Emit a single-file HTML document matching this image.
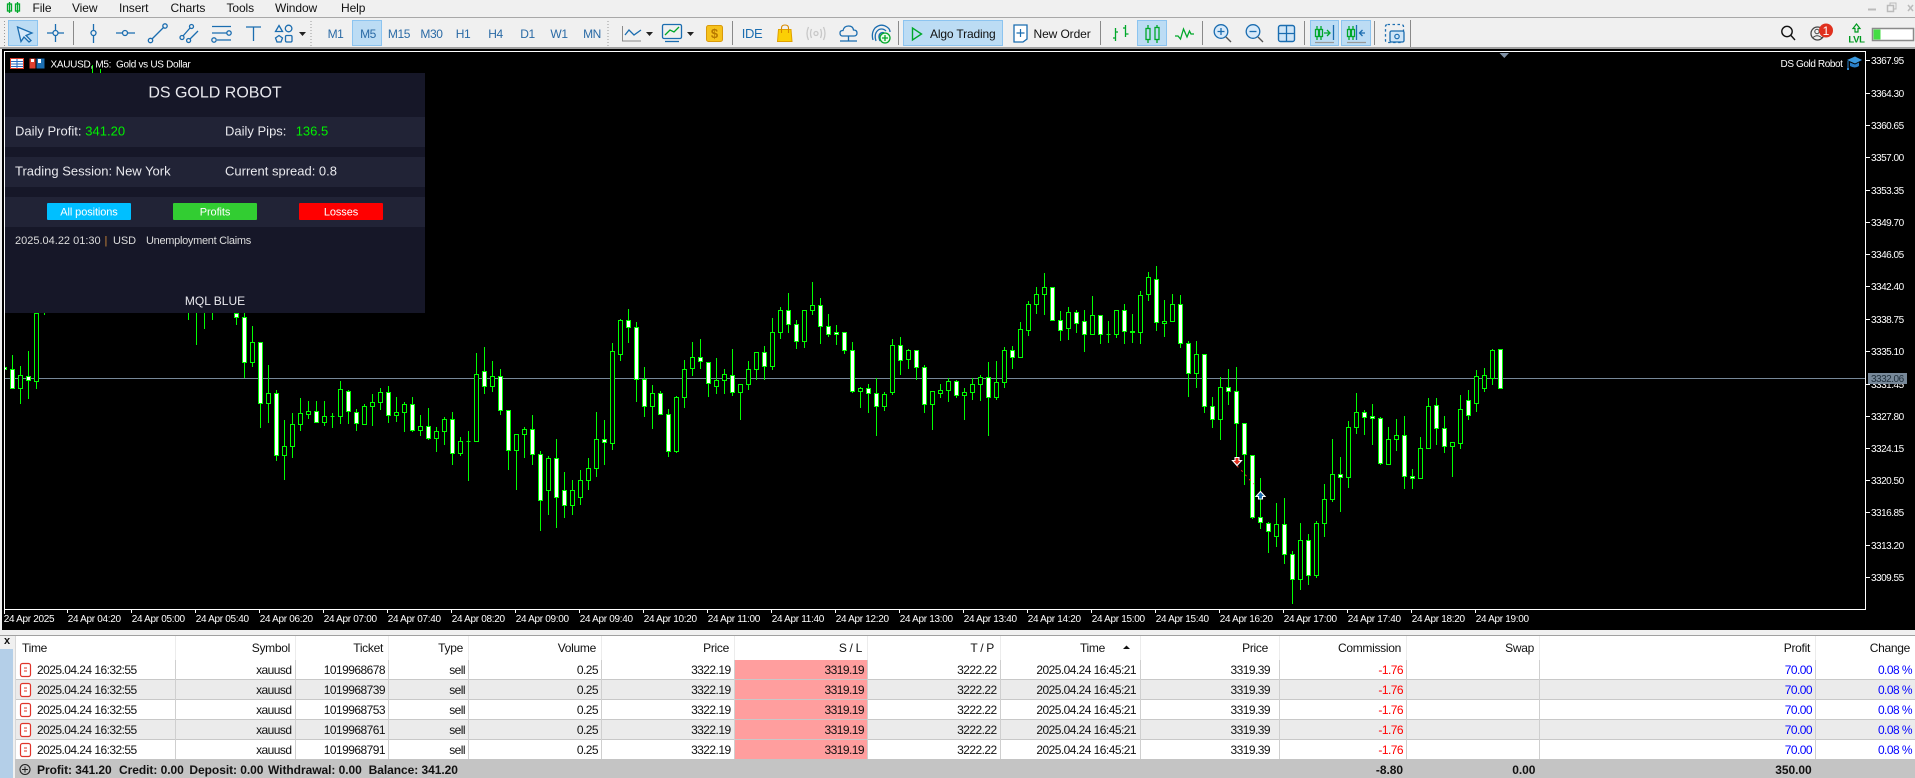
<!DOCTYPE html>
<html lang="en">
<head>
<meta charset="utf-8">
<title>XAUUSD M5 - DS Gold Robot</title>
<style>
html,body{margin:0;padding:0;background:#f0f0f0;width:1915px;height:778px;overflow:hidden}
svg{display:block}
text{font-family:"Liberation Sans",Arial,sans-serif}
.m{font-size:12px;fill:#111;letter-spacing:-.1px}
.tf{font-size:12px;fill:#2a6aa5;text-anchor:middle;letter-spacing:-.4px}
.px{font-size:10px;fill:#fff;letter-spacing:-.5px}
.tm{font-size:10px;fill:#fff;letter-spacing:-.3px}
.h{font-size:12px;fill:#111;letter-spacing:-.3px;text-anchor:end}
.c{font-size:12px;fill:#111;letter-spacing:-.55px;text-anchor:end}
.r{font-size:12px;fill:#f00;letter-spacing:-.55px;text-anchor:end}
.b{font-size:12px;fill:#00f;letter-spacing:-.55px;text-anchor:end}
.d{font-size:12px;fill:#111;letter-spacing:-.55px}
.s{font-size:12px;fill:#111;font-weight:bold;letter-spacing:-.05px}
.pl{font-size:13px;fill:#e9e9ee}
.gr{font-size:13px;fill:#00f000}
.bt{font-size:11px;fill:#fff;text-anchor:middle;letter-spacing:-.1px}
.nw{font-size:11px;fill:#dcdcdc}
.i{fill:none;stroke:#1b6db0;stroke-width:1.3}
.g{fill:none;stroke:#00a82a;stroke-width:1.3}
</style>
</head>
<body>
<svg width="1915" height="778" viewBox="0 0 1915 778" xmlns="http://www.w3.org/2000/svg">
<rect width="1915" height="778" fill="#f0f0f0"/>

<!-- menu -->
<g class="g" fill="none" stroke="#00a82a"><path d="M9.5 2V13M17.5 2V13"/><rect x="7.5" y="4" width="4" height="7"/><rect x="15.5" y="4" width="4" height="7"/></g>
<text class="m" x="32.5" y="12">File</text>
<text class="m" x="72" y="12">View</text>
<text class="m" x="119" y="12">Insert</text>
<text class="m" x="170.5" y="12">Charts</text>
<text class="m" x="226.5" y="12">Tools</text>
<text class="m" x="275" y="12">Window</text>
<text class="m" x="341" y="12">Help</text>
<rect x="0" y="17" width="1915" height="1" fill="#a8a8a8"/>
<path d="M1868 9.5H1876" stroke="#bbb" stroke-width="2"/>
<rect x="1887.5" y="5.5" width="6" height="6" fill="none" stroke="#bbb" stroke-width="1.5"/>
<path d="M1890 5V3H1896V9H1894" fill="none" stroke="#bbb"/>
<path d="M1908 5L1913 11M1913 5L1908 11" stroke="#bbb" stroke-width="1.5"/>

<!-- toolbar separators -->
<path d="M4.5 21V46M311 21V46M608 21V46" stroke="#9a9a9a" stroke-dasharray="1 2"/>
<path d="M73.5 21V45M732.5 21V45M898.5 21V45M1100.5 21V45M1202.5 21V45M1304.5 21V45M1374.5 21V45M1410.5 20V47" stroke="#8a8a8a"/>

<!-- highlighted buttons -->
<g fill="#bcdcf4" stroke="#8cc4f0">
<rect x="8.5" y="20.5" width="29" height="25"/>
<rect x="352.5" y="20.5" width="29" height="25"/>
<rect x="903.5" y="20.5" width="99" height="25"/>
<rect x="1137.5" y="20.5" width="29" height="25"/>
<rect x="1310.5" y="20.5" width="28" height="25"/>
<rect x="1341.5" y="20.5" width="29" height="25"/>
</g>

<!-- drawing tools -->
<path d="M17.5 27L32 33L26 35.5L31 40.5L29 42L24 37L21 41.5Z" fill="#d8eafa" stroke="#1b6db0" stroke-width="1.3"/>
<g class="i">
<path d="M47 33H53M58 33H64M55.5 24V30.5M55.5 35.5V42"/><circle cx="55.5" cy="33" r="2.5"/>
<path d="M93.5 24V30.5M93.5 35.5V43"/><circle cx="93.5" cy="33" r="2.5"/>
<path d="M116 33H122.5M127.5 33H135"/><circle cx="125" cy="33" r="2.5"/>
<path d="M152 39L164 27"/><circle cx="150.5" cy="40.5" r="2.2"/><circle cx="165" cy="26" r="2.2"/>
<path d="M183 36L190 28M190 39L198 31"/><circle cx="182" cy="37.5" r="2"/><circle cx="191.5" cy="26.5" r="2"/><circle cx="188.6" cy="40.5" r="2"/>
<path d="M212 26.5H231M212 33H227M217 40H231"/><circle cx="229" cy="33" r="2.2"/><circle cx="214" cy="40" r="2.2"/>
<path d="M246 27H261M253.5 27V41"/>
<path d="M279 25.5L282.5 31.5H275.5Z"/><circle cx="288.6" cy="28.5" r="3.3"/>
<path d="M279 35.5L282.5 38L281 42H277L275.5 38Z"/><rect x="285.5" y="35.5" width="6.5" height="6.5" rx="1.2"/>
</g>
<path d="M299 32H306L302.5 36Z" fill="#222"/>

<!-- timeframes -->
<text class="tf" x="335.5" y="38">M1</text>
<text class="tf" x="368" y="38">M5</text>
<text class="tf" x="399" y="38">M15</text>
<text class="tf" x="431.5" y="38">M30</text>
<text class="tf" x="463" y="38">H1</text>
<text class="tf" x="495.5" y="38">H4</text>
<text class="tf" x="527.5" y="38">D1</text>
<text class="tf" x="559" y="38">W1</text>
<text class="tf" x="592" y="38">MN</text>

<!-- chart style icons -->
<path d="M622.5 26V41H641" fill="none" stroke="#8a8a8a"/>
<path d="M625 35L629 30L634 35L641 30" class="i"/>
<path d="M646 32H653L649.5 36Z" fill="#222"/>
<rect x="662.5" y="24.5" width="19" height="14" rx="1.5" class="i"/>
<path d="M665 35L670 30L674 32L679 27" class="g"/>
<path d="M665 41.5H679" class="i"/>
<path d="M687 32H694L690.5 36Z" fill="#222"/>
<rect x="706.5" y="25.5" width="16" height="16" rx="2" fill="#f6c21c" stroke="#d99a0a"/>
<text x="714.5" y="38" font-size="13" font-weight="bold" fill="#b87800" text-anchor="middle">$</text>

<text x="752" y="38" font-size="13" fill="#1b6db0" text-anchor="middle" letter-spacing="-.4">IDE</text>

<!-- market bag -->
<path d="M778.5 29.5H791L792 41.5H777.5Z" fill="#fbcf05" stroke="#e0a000"/>
<path d="M781.5 33V28Q781.5 25 785 25Q788.5 25 788.5 28V33" fill="none" stroke="#d88a00" stroke-width="1.1"/>

<!-- signals -->
<g fill="none" stroke="#c8c8c8" stroke-width="1.3">
<circle cx="816" cy="33.5" r="2"/>
<path d="M811.5 29Q809.5 33.5 811.5 38M820.5 29Q822.5 33.5 820.5 38M808.5 27Q805.5 33.5 808.5 40M823.5 27Q826.5 33.5 823.5 40"/>
</g>

<!-- cloud -->
<path d="M842.5 36Q840 36 840 33Q840 30.5 843 30.5Q844 26 848.5 26Q853 26 853.5 30Q857 30 857 33Q857 36 854 36Z" class="i"/>
<path d="M848.5 36V41M840 41H857" class="i"/>

<!-- vps -->
<g class="i">
<path d="M873 40Q871 33 875 28Q881 23 887 27Q890 29 890 32"/>
<path d="M876 41Q873.5 33 879 29.5Q883 28 886 31"/>
<path d="M880 41Q877.5 35 881 33Q883 32 884 33"/>
</g>
<circle cx="885" cy="38" r="5" fill="#eafbe8" stroke="#00a82a" stroke-width="1.3"/>
<path d="M885 35V41M882 38H888" stroke="#00a82a" stroke-width="1.3"/>

<!-- algo trading / new order -->
<path d="M912.5 28V40L921.5 34Z" fill="none" stroke="#00a82a" stroke-width="1.4"/>
<text x="930" y="38" font-size="12" fill="#111" letter-spacing="-.15">Algo Trading</text>
<path d="M1014 25H1027V39L1023 42H1014Z" fill="#fff" stroke="#1b6db0" stroke-width="1.3"/>
<path d="M1020.5 29V37M1016.5 33H1024.5" stroke="#1b6db0" stroke-width="1.2"/>
<text x="1033.5" y="38" font-size="12" fill="#111" letter-spacing="-.1">New Order</text>

<!-- chart types -->
<g class="g">
<path d="M1115.5 28V41M1113 38H1115.5M1115.5 32H1118"/>
<path d="M1125.5 25V37M1123 28H1125.5M1125.5 34H1128.5"/>
<path d="M1148 25V43M1157 25V43"/>
<rect x="1146" y="28.5" width="4" height="11" fill="#bcdcf4"/>
<rect x="1155" y="27.5" width="4" height="12" fill="#bcdcf4"/>
<path d="M1175 36L1178 36L1180.5 39L1183.5 29L1187 37L1189.5 31L1191 34H1194"/>
</g>

<!-- zoom -->
<g class="i" stroke-width="1.4">
<circle cx="1221" cy="31.5" r="6.8" fill="#d8eafa"/>
<path d="M1221 28V35M1217.5 31.5H1224.5"/>
<circle cx="1253" cy="31.5" r="6.8" fill="#d8eafa"/>
<path d="M1249.5 31.5H1256.5"/>
</g>
<path d="M1226 37L1231 42M1258 37L1263 42" stroke="#555" stroke-width="1.4"/>
<rect x="1278.5" y="25.5" width="16" height="16" rx="2" fill="#cfe5f7" stroke="#1b6db0" stroke-width="1.4"/>
<path d="M1286.5 25.5V41.5M1278.5 33.5H1294.5" stroke="#1b6db0" stroke-width="1.3"/>

<!-- autoscroll / shift -->
<g class="g">
<path d="M1317 26V40M1321 26V40"/>
<rect x="1315.5" y="29.5" width="3" height="7" fill="#bcdcf4"/><rect x="1319.5" y="29.5" width="3" height="7" fill="#bcdcf4"/>
<path d="M1324 33H1330M1327 30L1330 33L1327 36"/>
<path d="M1349 26V40M1353 26V40"/>
<rect x="1347.5" y="29.5" width="3" height="7" fill="#bcdcf4"/><rect x="1351.5" y="29.5" width="3" height="7" fill="#bcdcf4"/>
</g>
<path d="M1333.5 25V40M1356.5 25V40M1365 33H1359.5M1362.5 30L1359.5 33L1362.5 36" fill="none" stroke="#1b6db0" stroke-width="1.3"/>
<path d="M1315 42.5H1334M1347 42.5H1366" stroke="#999" stroke-width="1.2"/>

<!-- screenshot -->
<rect x="1385.5" y="24.5" width="18" height="18" rx="2" fill="none" stroke="#1b6db0" stroke-width="1.3" stroke-dasharray="2.5 2.5"/>
<rect x="1390" y="31" width="14" height="11" rx="1.5" fill="#cfe5f7" stroke="#1b6db0" stroke-width="1.3"/>
<circle cx="1397" cy="36.5" r="2.2" fill="none" stroke="#1b6db0" stroke-width="1.2"/>

<!-- right side toolbar -->
<circle cx="1787" cy="31.5" r="5.2" fill="none" stroke="#111" stroke-width="1.4"/>
<path d="M1791 35.5L1795 40" stroke="#111" stroke-width="1.4"/>
<circle cx="1817.5" cy="33.5" r="6.5" fill="none" stroke="#444" stroke-width="1.3"/>
<circle cx="1817" cy="31.5" r="2.2" fill="none" stroke="#444"/>
<path d="M1812.5 38Q1817 33.5 1822 38" fill="none" stroke="#444"/>
<circle cx="1826" cy="30.5" r="7" fill="#e0301e"/>
<text x="1826" y="35" font-size="12" fill="#fff" text-anchor="middle">1</text>
<path d="M1856.5 24L1860 28.5H1858V32H1855V28.5H1853Z" fill="none" stroke="#009a20" stroke-width="1.2"/>
<text x="1856.5" y="42.5" font-size="9.5" font-weight="bold" fill="#009a20" text-anchor="middle" letter-spacing="-.3">LVL</text>
<rect x="1872.5" y="28.5" width="41" height="12" fill="#fff" stroke="#8a8a8a" stroke-width="1.5"/>
<rect x="1873.5" y="29.5" width="7" height="10" fill="#44dd44"/>

<rect x="0" y="47" width="1915" height="2" fill="#a0a0a0"/>

<!-- chart -->
<rect x="2" y="49" width="1913" height="581" fill="#000"/>
<rect x="5" y="378" width="1860" height="1" fill="#778899"/>

<g shape-rendering="crispEdges">
<path fill="none" stroke="#0f0" d="M92.5 65V73M100.5 69V73M12.5 355V388M20.5 366V404M28.5 351V399M36.5 313V389M44.5 313V315M188.5 313V320M196.5 313V345M204.5 313V329M212.5 313V320M236.5 313V325M244.5 313V378M252.5 326V367M260.5 342V428M268.5 365V423M276.5 390V461M284.5 420V480M292.5 413V458M300.5 398V431M308.5 401V419M316.5 401V423M324.5 401V426M332.5 413V428M340.5 381V424M348.5 390V424M356.5 409V431M364.5 404V425M372.5 394V426M380.5 388V410M388.5 386V423M396.5 397V422M404.5 402V432M412.5 397V432M420.5 415V436M428.5 408V440M436.5 427V452M444.5 417V445M452.5 412V465M460.5 437V456M468.5 431V481M476.5 353V441M484.5 347V394M492.5 361V392M500.5 369V415M508.5 410V470M516.5 434V490M524.5 427V458M532.5 415V465M540.5 451V531M548.5 456V515M556.5 439V528M564.5 472V518M572.5 480V515M580.5 470V505M588.5 458V490M596.5 412V477M604.5 420V465M612.5 343V450M620.5 319V361M628.5 309V343M636.5 322V402M644.5 367V417M652.5 385V429M660.5 391V415M668.5 409V457M676.5 396V453M684.5 360V408M692.5 342V376M700.5 339V369M708.5 362V397M716.5 358V394M724.5 369V394M732.5 349V396M740.5 384V420M748.5 361V390M756.5 352V380M764.5 346V380M772.5 318V370M780.5 307V339M788.5 293V333M796.5 320V349M804.5 310V348M812.5 282V315M820.5 298V344M828.5 314V337M836.5 325V345M844.5 332V354M852.5 342V393M860.5 387V408M868.5 384V413M876.5 378V436M884.5 392V411M892.5 339V395M900.5 337V375M908.5 349V369M916.5 350V380M924.5 365V413M932.5 391V430M940.5 384V398M948.5 378V402M956.5 380V398M964.5 388V420M972.5 378V400M980.5 375V401M988.5 362V436M996.5 361V400M1004.5 347V388M1012.5 346V369M1020.5 322V357M1028.5 301V336M1036.5 287V314M1044.5 273V315M1052.5 287V320M1060.5 311V341M1068.5 307V340M1076.5 310V333M1084.5 310V352M1092.5 296V335M1100.5 315V344M1108.5 321V343M1116.5 310V338M1124.5 304V344M1132.5 314V343M1140.5 291V344M1148.5 272V301M1156.5 266V331M1164.5 300V337M1172.5 294V322M1180.5 295V348M1188.5 341V397M1196.5 341V388M1204.5 354V413M1212.5 397V428M1220.5 377V440M1228.5 369V405M1236.5 367V457M1244.5 423V485M1252.5 455V519M1260.5 478V529M1268.5 522V553M1276.5 503V547M1284.5 498V564M1292.5 551V604M1300.5 523V590M1308.5 534V585M1316.5 521V578M1324.5 484V537M1332.5 439V502M1340.5 457V512M1348.5 421V488M1356.5 393V434M1364.5 410V435M1372.5 404V445M1380.5 417V465M1388.5 427V465M1396.5 419V451M1404.5 416V489M1412.5 469V489M1420.5 437V478M1428.5 398V449M1436.5 398V445M1444.5 416V453M1452.5 442V477M1460.5 395V449M1468.5 390V420M1476.5 370V412M1484.5 368V392M1492.5 349V385M1500.5 349V389"/>
<g transform="translate(0,.5)">
<path fill="#000" stroke="#0f0" d="M18.5 375h4V388h-4zM34.5 313h4V381h-4zM250.5 342h4V362h-4zM266.5 393h4V403h-4zM282.5 446h4V455h-4zM290.5 424h4V446h-4zM298.5 413h4V424h-4zM306.5 411h4V414h-4zM322.5 416h4V422h-4zM330.5 416h4V416h-4zM338.5 389h4V416h-4zM362.5 406h4V424h-4zM370.5 402h4V406h-4zM378.5 392h4V402h-4zM394.5 412h4V415h-4zM402.5 404h4V412h-4zM418.5 426h4V430h-4zM434.5 431h4V438h-4zM442.5 419h4V431h-4zM458.5 441h4V453h-4zM466.5 441h4V441h-4zM474.5 374h4V441h-4zM490.5 376h4V386h-4zM514.5 434h4V450h-4zM522.5 429h4V434h-4zM546.5 458h4V490h-4zM570.5 490h4V505h-4zM578.5 480h4V497h-4zM586.5 468h4V480h-4zM594.5 439h4V468h-4zM610.5 351h4V443h-4zM618.5 320h4V354h-4zM650.5 393h4V406h-4zM674.5 397h4V451h-4zM682.5 369h4V397h-4zM690.5 357h4V368h-4zM714.5 380h4V386h-4zM722.5 374h4V380h-4zM738.5 384h4V392h-4zM746.5 369h4V384h-4zM754.5 352h4V369h-4zM770.5 332h4V366h-4zM778.5 310h4V332h-4zM802.5 310h4V341h-4zM810.5 305h4V310h-4zM858.5 388h4V391h-4zM882.5 394h4V406h-4zM890.5 345h4V392h-4zM906.5 350h4V359h-4zM930.5 391h4V404h-4zM938.5 390h4V393h-4zM946.5 381h4V390h-4zM962.5 392h4V395h-4zM970.5 384h4V392h-4zM978.5 377h4V384h-4zM994.5 382h4V397h-4zM1002.5 350h4V382h-4zM1018.5 329h4V357h-4zM1026.5 304h4V330h-4zM1034.5 294h4V304h-4zM1042.5 287h4V294h-4zM1066.5 312h4V328h-4zM1090.5 315h4V334h-4zM1106.5 334h4V334h-4zM1114.5 310h4V334h-4zM1138.5 295h4V332h-4zM1146.5 277h4V294h-4zM1162.5 321h4V323h-4zM1170.5 304h4V321h-4zM1194.5 354h4V373h-4zM1218.5 387h4V419h-4zM1274.5 524h4V536h-4zM1298.5 540h4V579h-4zM1314.5 523h4V575h-4zM1322.5 499h4V523h-4zM1330.5 474h4V499h-4zM1346.5 427h4V477h-4zM1354.5 412h4V427h-4zM1386.5 439h4V464h-4zM1394.5 435h4V439h-4zM1418.5 448h4V478h-4zM1426.5 406h4V448h-4zM1450.5 442h4V446h-4zM1458.5 409h4V443h-4zM1474.5 376h4V403h-4zM1482.5 375h4V388h-4zM1490.5 350h4V378h-4z"/>
<path fill="#fff" stroke="#0f0" d="M2.5 367h4V369h-4zM10.5 369h4V388h-4zM26.5 376h4V380h-4zM234.5 313h4V317h-4zM242.5 317h4V362h-4zM258.5 342h4V403h-4zM274.5 393h4V455h-4zM314.5 411h4V422h-4zM346.5 391h4V411h-4zM354.5 412h4V423h-4zM386.5 392h4V415h-4zM410.5 404h4V430h-4zM426.5 426h4V438h-4zM450.5 419h4V453h-4zM482.5 371h4V386h-4zM498.5 376h4V410h-4zM506.5 410h4V450h-4zM530.5 429h4V454h-4zM538.5 454h4V500h-4zM554.5 458h4V497h-4zM562.5 490h4V505h-4zM602.5 439h4V442h-4zM626.5 320h4V327h-4zM634.5 327h4V379h-4zM642.5 379h4V406h-4zM658.5 393h4V414h-4zM666.5 414h4V451h-4zM698.5 357h4V361h-4zM706.5 362h4V383h-4zM730.5 375h4V392h-4zM762.5 352h4V366h-4zM786.5 310h4V324h-4zM794.5 324h4V341h-4zM818.5 305h4V326h-4zM826.5 326h4V334h-4zM834.5 332h4V334h-4zM842.5 332h4V350h-4zM850.5 350h4V391h-4zM866.5 388h4V393h-4zM874.5 393h4V406h-4zM898.5 345h4V360h-4zM914.5 350h4V367h-4zM922.5 367h4V404h-4zM954.5 381h4V395h-4zM986.5 377h4V397h-4zM1010.5 350h4V357h-4zM1050.5 287h4V320h-4zM1058.5 320h4V330h-4zM1074.5 312h4V323h-4zM1082.5 321h4V334h-4zM1098.5 315h4V334h-4zM1122.5 310h4V331h-4zM1130.5 331h4V332h-4zM1154.5 279h4V322h-4zM1178.5 304h4V343h-4zM1186.5 343h4V373h-4zM1202.5 354h4V406h-4zM1210.5 406h4V419h-4zM1226.5 387h4V391h-4zM1234.5 391h4V423h-4zM1242.5 423h4V454h-4zM1250.5 455h4V517h-4zM1258.5 517h4V522h-4zM1266.5 523h4V531h-4zM1282.5 524h4V554h-4zM1290.5 554h4V579h-4zM1306.5 540h4V575h-4zM1338.5 474h4V477h-4zM1362.5 412h4V417h-4zM1370.5 416h4V418h-4zM1378.5 418h4V463h-4zM1402.5 435h4V476h-4zM1410.5 476h4V478h-4zM1434.5 405h4V428h-4zM1442.5 428h4V446h-4zM1466.5 400h4V415h-4zM1498.5 349h4V388h-4z"/>
</g>
</g>

<!-- trade markers -->
<path d="M1237 466L1243 472L1248 478L1254 484" fill="none" stroke="#e03020" stroke-dasharray="2 4"/>
<path d="M1235 457.5H1239V460.5H1241.5L1237 465.5L1232.5 460.5H1235Z" fill="#e03020" stroke="#fff" stroke-width="1.1"/>
<path d="M1260.5 491.5L1265 496.5H1262.5V499H1258.5V496.5H1256Z" fill="#1b6db0" stroke="#fff" stroke-width="1.1"/>

<!-- chart frame -->
<rect x="0" y="49" width="2" height="581" fill="#f0f0f0"/>
<rect x="2" y="49" width="2" height="561" fill="#000"/>
<rect x="4" y="51" width="1862" height="1" fill="#fff"/>
<rect x="4" y="51" width="1" height="559" fill="#fff"/>
<rect x="1865" y="51" width="1" height="559" fill="#fff"/>
<rect x="4" y="609" width="1862" height="1" fill="#fff"/>

<!-- price axis -->
<path d="M1866 60.5H1870M1866 93.5H1870M1866 125.5H1870M1866 157.5H1870M1866 190.5H1870M1866 222.5H1870M1866 254.5H1870M1866 286.5H1870M1866 319.5H1870M1866 351.5H1870M1866 384.5H1870M1866 416.5H1870M1866 448.5H1870M1866 480.5H1870M1866 512.5H1870M1866 545.5H1870M1866 577.5H1870" stroke="#fff"/>
<text class="px" x="1871" y="64">3367.95</text>
<text class="px" x="1871" y="97">3364.30</text>
<text class="px" x="1871" y="129">3360.65</text>
<text class="px" x="1871" y="161">3357.00</text>
<text class="px" x="1871" y="194">3353.35</text>
<text class="px" x="1871" y="226">3349.70</text>
<text class="px" x="1871" y="258">3346.05</text>
<text class="px" x="1871" y="290">3342.40</text>
<text class="px" x="1871" y="323">3338.75</text>
<text class="px" x="1871" y="355">3335.10</text>
<text class="px" x="1871" y="388">3331.45</text>
<text class="px" x="1871" y="420">3327.80</text>
<text class="px" x="1871" y="452">3324.15</text>
<text class="px" x="1871" y="484">3320.50</text>
<text class="px" x="1871" y="516">3316.85</text>
<text class="px" x="1871" y="549">3313.20</text>
<text class="px" x="1871" y="581">3309.55</text>
<rect x="1868" y="373" width="39" height="11" fill="#778899"/>
<text x="1871" y="382" font-size="10" fill="#20303c" letter-spacing="-.5">3332.06</text>

<!-- time axis -->
<path d="M4.5 610V614M67.5 610V613M131.5 610V613M195.5 610V613M259.5 610V613M323.5 610V613M387.5 610V613M451.5 610V613M515.5 610V613M579.5 610V613M643.5 610V613M707.5 610V613M771.5 610V613M835.5 610V613M899.5 610V613M963.5 610V613M1027.5 610V613M1091.5 610V613M1155.5 610V613M1219.5 610V613M1283.5 610V613M1347.5 610V613M1411.5 610V613M1475.5 610V613" stroke="#fff"/>
<g class="tm">
<text class="tm" x="3.7" y="622">24 Apr 2025</text>
<text class="tm" x="67.7" y="622">24 Apr 04:20</text>
<text class="tm" x="131.7" y="622">24 Apr 05:00</text>
<text class="tm" x="195.7" y="622">24 Apr 05:40</text>
<text class="tm" x="259.7" y="622">24 Apr 06:20</text>
<text class="tm" x="323.7" y="622">24 Apr 07:00</text>
<text class="tm" x="387.7" y="622">24 Apr 07:40</text>
<text class="tm" x="451.7" y="622">24 Apr 08:20</text>
<text class="tm" x="515.7" y="622">24 Apr 09:00</text>
<text class="tm" x="579.7" y="622">24 Apr 09:40</text>
<text class="tm" x="643.7" y="622">24 Apr 10:20</text>
<text class="tm" x="707.7" y="622">24 Apr 11:00</text>
<text class="tm" x="771.7" y="622">24 Apr 11:40</text>
<text class="tm" x="835.7" y="622">24 Apr 12:20</text>
<text class="tm" x="899.7" y="622">24 Apr 13:00</text>
<text class="tm" x="963.7" y="622">24 Apr 13:40</text>
<text class="tm" x="1027.7" y="622">24 Apr 14:20</text>
<text class="tm" x="1091.7" y="622">24 Apr 15:00</text>
<text class="tm" x="1155.7" y="622">24 Apr 15:40</text>
<text class="tm" x="1219.7" y="622">24 Apr 16:20</text>
<text class="tm" x="1283.7" y="622">24 Apr 17:00</text>
<text class="tm" x="1347.7" y="622">24 Apr 17:40</text>
<text class="tm" x="1411.7" y="622">24 Apr 18:20</text>
<text class="tm" x="1475.7" y="622">24 Apr 19:00</text>
</g>

<!-- chart header -->
<rect x="10.5" y="58.5" width="13" height="10" fill="#fff" stroke="#d83a2a"/>
<path d="M11 61.5H23M11 64H23M11 66.5H23M17 59V68" stroke="#2a6ac0"/>
<rect x="29.5" y="58.5" width="6" height="10" fill="#e04030"/>
<rect x="36.5" y="58.5" width="8" height="10" fill="#1b6db0"/>
<rect x="31" y="59" width="3" height="3" fill="#fff"/><rect x="38" y="59" width="3" height="4" fill="#fff"/>
<text x="50.5" y="67.5" font-size="10" fill="#fff" letter-spacing="-.3" style="white-space:pre">XAUUSD, M5:  Gold vs US Dollar</text>
<path d="M1499.5 53H1509L1504.3 58Z" fill="#7f90a4"/>
<text x="1780.5" y="67" font-size="10" fill="#fff" letter-spacing="-.4">DS Gold Robot</text>
<path d="M1847 60L1855 56.5L1862 60L1855 63.5Z" fill="#3b9ae0"/>
<path d="M1850 62.5V66Q1855 69 1859 66V62.5L1855 64.5Z" fill="#2a7fc8"/>
<path d="M1848 61V68" stroke="#2a7fc8"/><rect x="1847" y="68" width="2" height="2" fill="#2a7fc8"/>

<!-- robot panel -->
<rect x="5" y="73" width="420" height="240" fill="#161728"/>
<rect x="5" y="117" width="420" height="30" fill="#212336"/>
<rect x="5" y="157" width="420" height="30" fill="#212336"/>
<rect x="5" y="197" width="420" height="30" fill="#212336"/>
<text x="215" y="97.5" font-size="16" fill="#e9e9ee" text-anchor="middle">DS GOLD ROBOT</text>
<text class="pl" x="15" y="135.5">Daily Profit:</text>
<text class="gr" x="85.3" y="135.5">341.20</text>
<text class="pl" x="225" y="135.5">Daily Pips:</text>
<text class="gr" x="295.7" y="135.5">136.5</text>
<text class="pl" x="15" y="175.5">Trading Session: New York</text>
<text class="pl" x="225" y="175.5">Current spread: 0.8</text>
<rect x="47" y="203" width="84" height="17" rx="1" fill="#00bfff"/>
<rect x="173" y="203" width="84" height="17" rx="1" fill="#32cd32"/>
<rect x="299" y="203" width="84" height="17" rx="1" fill="#f00"/>
<text class="bt" x="89" y="215.5">All positions</text>
<text class="bt" x="215" y="215.5">Profits</text>
<text class="bt" x="341" y="215.5">Losses</text>
<text class="nw" x="15" y="244">2025.04.22 01:30</text>
<text x="104.5" y="244" font-size="11" fill="#d08a3a">|</text>
<text class="nw" x="113" y="244" letter-spacing="-.1">USD</text>
<text class="nw" x="146" y="244" letter-spacing="-.3">Unemployment Claims</text>
<text x="215" y="305" font-size="12" fill="#e9e9ee" text-anchor="middle">MQL BLUE</text>

<!-- toolbox panel -->
<rect x="0" y="630" width="1915" height="148" fill="#f0f0f0"/>
<rect x="0" y="635" width="1915" height="1" fill="#a0a0a0"/>
<text x="7" y="644" font-size="11" font-weight="bold" fill="#111" text-anchor="middle">x</text>
<rect x="0" y="649" width="13" height="129" fill="#b4cfe8"/>

<rect x="15" y="636" width="1900" height="24" fill="#fff"/>
<rect x="15" y="660" width="1900" height="20" fill="#fff"/>
<rect x="15" y="680" width="1900" height="20" fill="#ebebeb"/>
<rect x="15" y="700" width="1900" height="20" fill="#fff"/>
<rect x="15" y="720" width="1900" height="20" fill="#ebebeb"/>
<rect x="15" y="740" width="1900" height="19" fill="#fff"/>
<rect x="735" y="660" width="132" height="99" fill="#ff9e9e"/>
<path d="M15 679.5H1915M15 699.5H1915M15 719.5H1915M15 739.5H1915" stroke="#c8c8c8"/>
<path d="M175.5 636V660M295.5 636V660M388.5 636V660M468.5 636V660M601.5 636V660M734.5 636V660M867.5 636V660M1000.5 636V660M1140.5 636V660M1279.5 636V660M1406.5 636V660M1539.5 636V660M1815.5 636V660" stroke="#ececec"/>
<path d="M175.5 660V759M295.5 660V759M388.5 660V759M468.5 660V759M601.5 660V759M734.5 660V759M867.5 660V759M1000.5 660V759M1140.5 660V759M1279.5 660V759M1406.5 660V759M1539.5 660V759M1815.5 660V759" stroke="#cfcfcf"/>
<path d="M15.5 636V759" stroke="#d8d8d8"/>

<!-- table header -->
<text x="22" y="652" font-size="12" fill="#111" letter-spacing="-.3">Time</text>
<text class="h" x="290" y="652">Symbol</text>
<text class="h" x="383" y="652">Ticket</text>
<text class="h" x="463" y="652">Type</text>
<text class="h" x="596" y="652">Volume</text>
<text class="h" x="729" y="652">Price</text>
<text class="h" x="862" y="652">S / L</text>
<text class="h" x="994" y="652">T / P</text>
<text class="h" x="1105" y="652">Time</text>
<path d="M1123 649H1130L1126.5 645.5Z" fill="#111"/>
<text class="h" x="1268" y="652">Price</text>
<text class="h" x="1401" y="652">Commission</text>
<text class="h" x="1534" y="652">Swap</text>
<text class="h" x="1810" y="652">Profit</text>
<text class="h" x="1910" y="652">Change</text>

<!-- row icons -->
<g fill="#fff" stroke="#e0342a" stroke-width="1.2">
<rect x="20.5" y="663.5" width="10" height="13" rx="2"/>
<rect x="20.5" y="683.5" width="10" height="13" rx="2"/>
<rect x="20.5" y="703.5" width="10" height="13" rx="2"/>
<rect x="20.5" y="723.5" width="10" height="13" rx="2"/>
<rect x="20.5" y="743.5" width="10" height="13" rx="2"/>
</g>
<path d="M24 668H27M24 671H27M24 688H27M24 691H27M24 708H27M24 711H27M24 728H27M24 731H27M24 748H27M24 751H27" stroke="#e0342a"/>

<!-- row 1 -->
<text class="d" x="37" y="674">2025.04.24 16:32:55</text><text class="c" x="291.5" y="674">xauusd</text><text class="c" x="385" y="674">1019968678</text><text class="c" x="465" y="674">sell</text><text class="c" x="598" y="674">0.25</text><text class="c" x="730.6" y="674">3322.19</text><text class="c" x="864" y="674">3319.19</text><text class="c" x="996.7" y="674">3222.22</text><text class="c" x="1136" y="674">2025.04.24 16:45:21</text><text class="c" x="1270" y="674">3319.39</text><text class="r" x="1403" y="674">-1.76</text><text class="b" x="1812" y="674">70.00</text><text class="b" x="1912" y="674">0.08 %</text>
<!-- row 2 -->
<text class="d" x="37" y="694">2025.04.24 16:32:55</text><text class="c" x="291.5" y="694">xauusd</text><text class="c" x="385" y="694">1019968739</text><text class="c" x="465" y="694">sell</text><text class="c" x="598" y="694">0.25</text><text class="c" x="730.6" y="694">3322.19</text><text class="c" x="864" y="694">3319.19</text><text class="c" x="996.7" y="694">3222.22</text><text class="c" x="1136" y="694">2025.04.24 16:45:21</text><text class="c" x="1270" y="694">3319.39</text><text class="r" x="1403" y="694">-1.76</text><text class="b" x="1812" y="694">70.00</text><text class="b" x="1912" y="694">0.08 %</text>
<!-- row 3 -->
<text class="d" x="37" y="714">2025.04.24 16:32:55</text><text class="c" x="291.5" y="714">xauusd</text><text class="c" x="385" y="714">1019968753</text><text class="c" x="465" y="714">sell</text><text class="c" x="598" y="714">0.25</text><text class="c" x="730.6" y="714">3322.19</text><text class="c" x="864" y="714">3319.19</text><text class="c" x="996.7" y="714">3222.22</text><text class="c" x="1136" y="714">2025.04.24 16:45:21</text><text class="c" x="1270" y="714">3319.39</text><text class="r" x="1403" y="714">-1.76</text><text class="b" x="1812" y="714">70.00</text><text class="b" x="1912" y="714">0.08 %</text>
<!-- row 4 -->
<text class="d" x="37" y="734">2025.04.24 16:32:55</text><text class="c" x="291.5" y="734">xauusd</text><text class="c" x="385" y="734">1019968761</text><text class="c" x="465" y="734">sell</text><text class="c" x="598" y="734">0.25</text><text class="c" x="730.6" y="734">3322.19</text><text class="c" x="864" y="734">3319.19</text><text class="c" x="996.7" y="734">3222.22</text><text class="c" x="1136" y="734">2025.04.24 16:45:21</text><text class="c" x="1270" y="734">3319.39</text><text class="r" x="1403" y="734">-1.76</text><text class="b" x="1812" y="734">70.00</text><text class="b" x="1912" y="734">0.08 %</text>
<!-- row 5 -->
<text class="d" x="37" y="754">2025.04.24 16:32:55</text><text class="c" x="291.5" y="754">xauusd</text><text class="c" x="385" y="754">1019968791</text><text class="c" x="465" y="754">sell</text><text class="c" x="598" y="754">0.25</text><text class="c" x="730.6" y="754">3322.19</text><text class="c" x="864" y="754">3319.19</text><text class="c" x="996.7" y="754">3222.22</text><text class="c" x="1136" y="754">2025.04.24 16:45:21</text><text class="c" x="1270" y="754">3319.39</text><text class="r" x="1403" y="754">-1.76</text><text class="b" x="1812" y="754">70.00</text><text class="b" x="1912" y="754">0.08 %</text>

<!-- summary -->
<rect x="15" y="759" width="1900" height="19" fill="#c4c4c4"/>
<circle cx="25" cy="769.5" r="5" fill="none" stroke="#222" stroke-width="1.1"/>
<path d="M22 769.5H28M25 766.5V772.5" stroke="#222"/>
<text class="s" x="37" y="774">Profit: 341.20</text>
<text class="s" x="119" y="774">Credit: 0.00</text>
<text class="s" x="189.4" y="774">Deposit: 0.00</text>
<text class="s" x="268" y="774">Withdrawal: 0.00</text>
<text class="s" x="368.6" y="774">Balance: 341.20</text>
<text class="s" x="1403" y="774" text-anchor="end">-8.80</text>
<text class="s" x="1535.4" y="774" text-anchor="end">0.00</text>
<text class="s" x="1811.7" y="774" text-anchor="end">350.00</text>
</svg>
</body>
</html>
